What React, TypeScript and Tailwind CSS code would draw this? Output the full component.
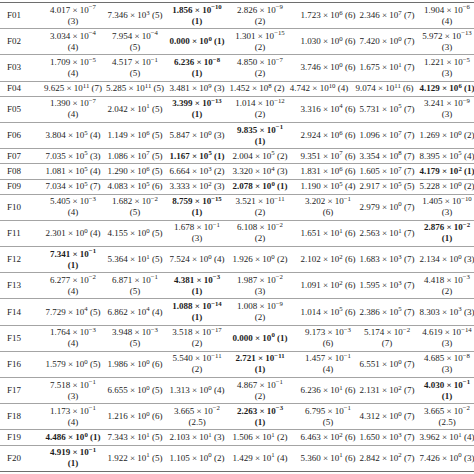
import React from "react";

type Cell = [string, string, string, string, string?];

const rows: [string, Cell[]][] = [
  ["F01", [["4.017","-7","3","w"],["7.346","3","5",""],["1.856","-10","1","bw"],["2.826","-9","2","w"],["1.723","6","6",""],["2.346","7","7",""],["1.904","-6","4","w"]]],
  ["F02", [["3.034","-4","4","w"],["7.954","-4","5","w"],["0.000","0","1","b"],["1.301","-15","2","w"],["1.030","0","6",""],["7.420","0","7",""],["5.972","-13","3","w"]]],
  ["F03", [["1.709","-5","4","w"],["4.517","-1","5","w"],["6.236","-8","1","bw"],["4.850","-7","2","w"],["3.746","0","6",""],["1.675","1","7",""],["1.221","-5","3","w"]]],
  ["F04", [["9.625","11","7",""],["5.285","11","5",""],["3.481","9","3",""],["1.452","8","2","","mr-[6px]"],["4.742","10","4","","mr-[18px]"],["9.074","11","6","","mr-[5px]"],["4.129","6","1","b"]]],
  ["F05", [["1.390","-7","4","w"],["2.042","1","5",""],["3.399","-13","1","bw"],["1.014","-12","2","w"],["3.316","4","6",""],["5.731","5","7",""],["3.241","-9","3","w"]]],
  ["F06", [["3.804","5","4",""],["1.149","6","5",""],["5.847","0","3",""],["9.835","-1","1","bw"],["2.924","6","6",""],["1.096","7","7",""],["1.269","0","2",""]]],
  ["F07", [["7.035","5","3",""],["1.086","7","5",""],["1.167","5","1","b"],["2.004","5","2",""],["9.351","7","6",""],["3.354","8","7",""],["8.395","5","4",""]]],
  ["F08", [["1.081","5","4",""],["1.290","6","5",""],["6.664","3","2",""],["3.320","4","3",""],["1.831","6","6",""],["1.605","7","7",""],["4.179","2","1","b"]]],
  ["F09", [["7.034","5","7",""],["4.083","5","6",""],["3.333","2","3",""],["2.078","0","1","b"],["1.190","5","4",""],["2.917","5","5",""],["5.228","0","2",""]]],
  ["F10", [["5.405","-3","4","w"],["1.682","-2","5","w"],["8.759","-15","1","bw"],["3.521","-11","2","w"],["3.202","-1","6","w"],["2.979","0","7",""],["1.405","-10","3","w"]]],
  ["F11", [["2.301","0","4",""],["4.155","0","5",""],["1.678","-1","3","w"],["6.108","-2","2","w"],["1.651","1","6",""],["2.563","1","7",""],["2.876","-2","1","bw"]]],
  ["F12", [["7.341","-1","1","bw"],["5.364","1","5",""],["7.524","0","4",""],["1.926","0","2",""],["2.102","2","6",""],["1.683","3","7",""],["2.134","0","3",""]]],
  ["F13", [["6.277","-2","4","w"],["6.871","-1","5","w"],["4.381","-3","1","bw"],["1.987","-2","3","w"],["1.091","2","6",""],["1.595","3","7",""],["4.418","-3","2","w"]]],
  ["F14", [["7.729","4","5",""],["6.862","4","4",""],["1.088","-14","1","bw"],["1.008","-9","2","w"],["1.014","5","6",""],["2.386","5","7",""],["8.303","3","3",""]]],
  ["F15", [["1.764","-3","4","w"],["3.948","-3","5","w"],["3.518","-17","2","w"],["0.000","0","1","b"],["9.173","-3","6","w"],["5.174","-2","7","w"],["4.619","-14","3","w"]]],
  ["F16", [["1.579","0","5",""],["1.986","0","6",""],["5.540","-11","2","w"],["2.721","-11","1","bw"],["1.457","-1","4","w"],["6.551","0","7",""],["4.685","-8","3","w"]]],
  ["F17", [["7.518","-1","3","w"],["6.655","0","5",""],["1.313","0","4",""],["4.867","-1","2","w"],["6.236","1","6",""],["2.131","2","7",""],["4.030","-1","1","bw"]]],
  ["F18", [["1.173","-1","4","w"],["1.216","0","6",""],["3.665","-2","2.5","w"],["2.263","-3","1","bw"],["6.795","-1","5","w"],["4.312","0","7",""],["3.665","-2","2.5","w"]]],
  ["F19", [["4.486","0","1","b"],["7.343","1","5",""],["2.103","1","3",""],["1.506","1","2",""],["6.463","2","6",""],["1.650","3","7",""],["3.962","1","4",""]]],
  ["F20", [["4.919","-1","1","bw"],["1.922","1","5",""],["1.105","0","2",""],["1.429","1","4",""],["5.360","1","6",""],["2.842","2","7",""],["7.426","0","3",""]]],
];

function Num({ m, e }: { m: string; e: string }) {
  return (
    <>
      {m} × 10<sup>{e.replace("-", "−")}</sup>
    </>
  );
}

function CellView({ c }: { c: Cell }) {
  const [m, e, r, f, extra] = c;
  const bold = f.includes("b");
  const wrap = f.includes("w");
  return (
    <div className={"flex flex-col items-center justify-center whitespace-nowrap " + (bold ? "font-bold " : "")}>
      {wrap ? (
        <>
          <span><Num m={m} e={e} /></span>
          <span>({r})</span>
        </>
      ) : (
        <span className={extra ?? ""}>
          <Num m={m} e={e} /> ({r})
        </span>
      )}
    </div>
  );
}

export default function App() {
  return (
    <div className="w-[474px] h-[474px] overflow-hidden bg-white text-[#1c1c1c] text-[9px] leading-[11px]" style={{ fontFamily: '"Liberation Serif", "Times New Roman", serif' }}>
      <div className="mt-[2px] border-t-[1.5px] border-[#6e6e6e]">
        {rows.map(([label, cells], i) => (
          <div
            key={label}
            className={
              "grid grid-cols-[42px_62px_62px_62px_64px_72px_46px_74px] items-center py-[1.6px] " +
              (i === rows.length - 1 ? "border-b-[1.5px] border-[#6e6e6e]" : "border-b border-[#a4a4a4]")
            }
          >
            <div className="pl-[7px]">{label}</div>
            {cells.map((c, j) => (
              <CellView key={j} c={c} />
            ))}
          </div>
        ))}
      </div>
    </div>
  );
}
